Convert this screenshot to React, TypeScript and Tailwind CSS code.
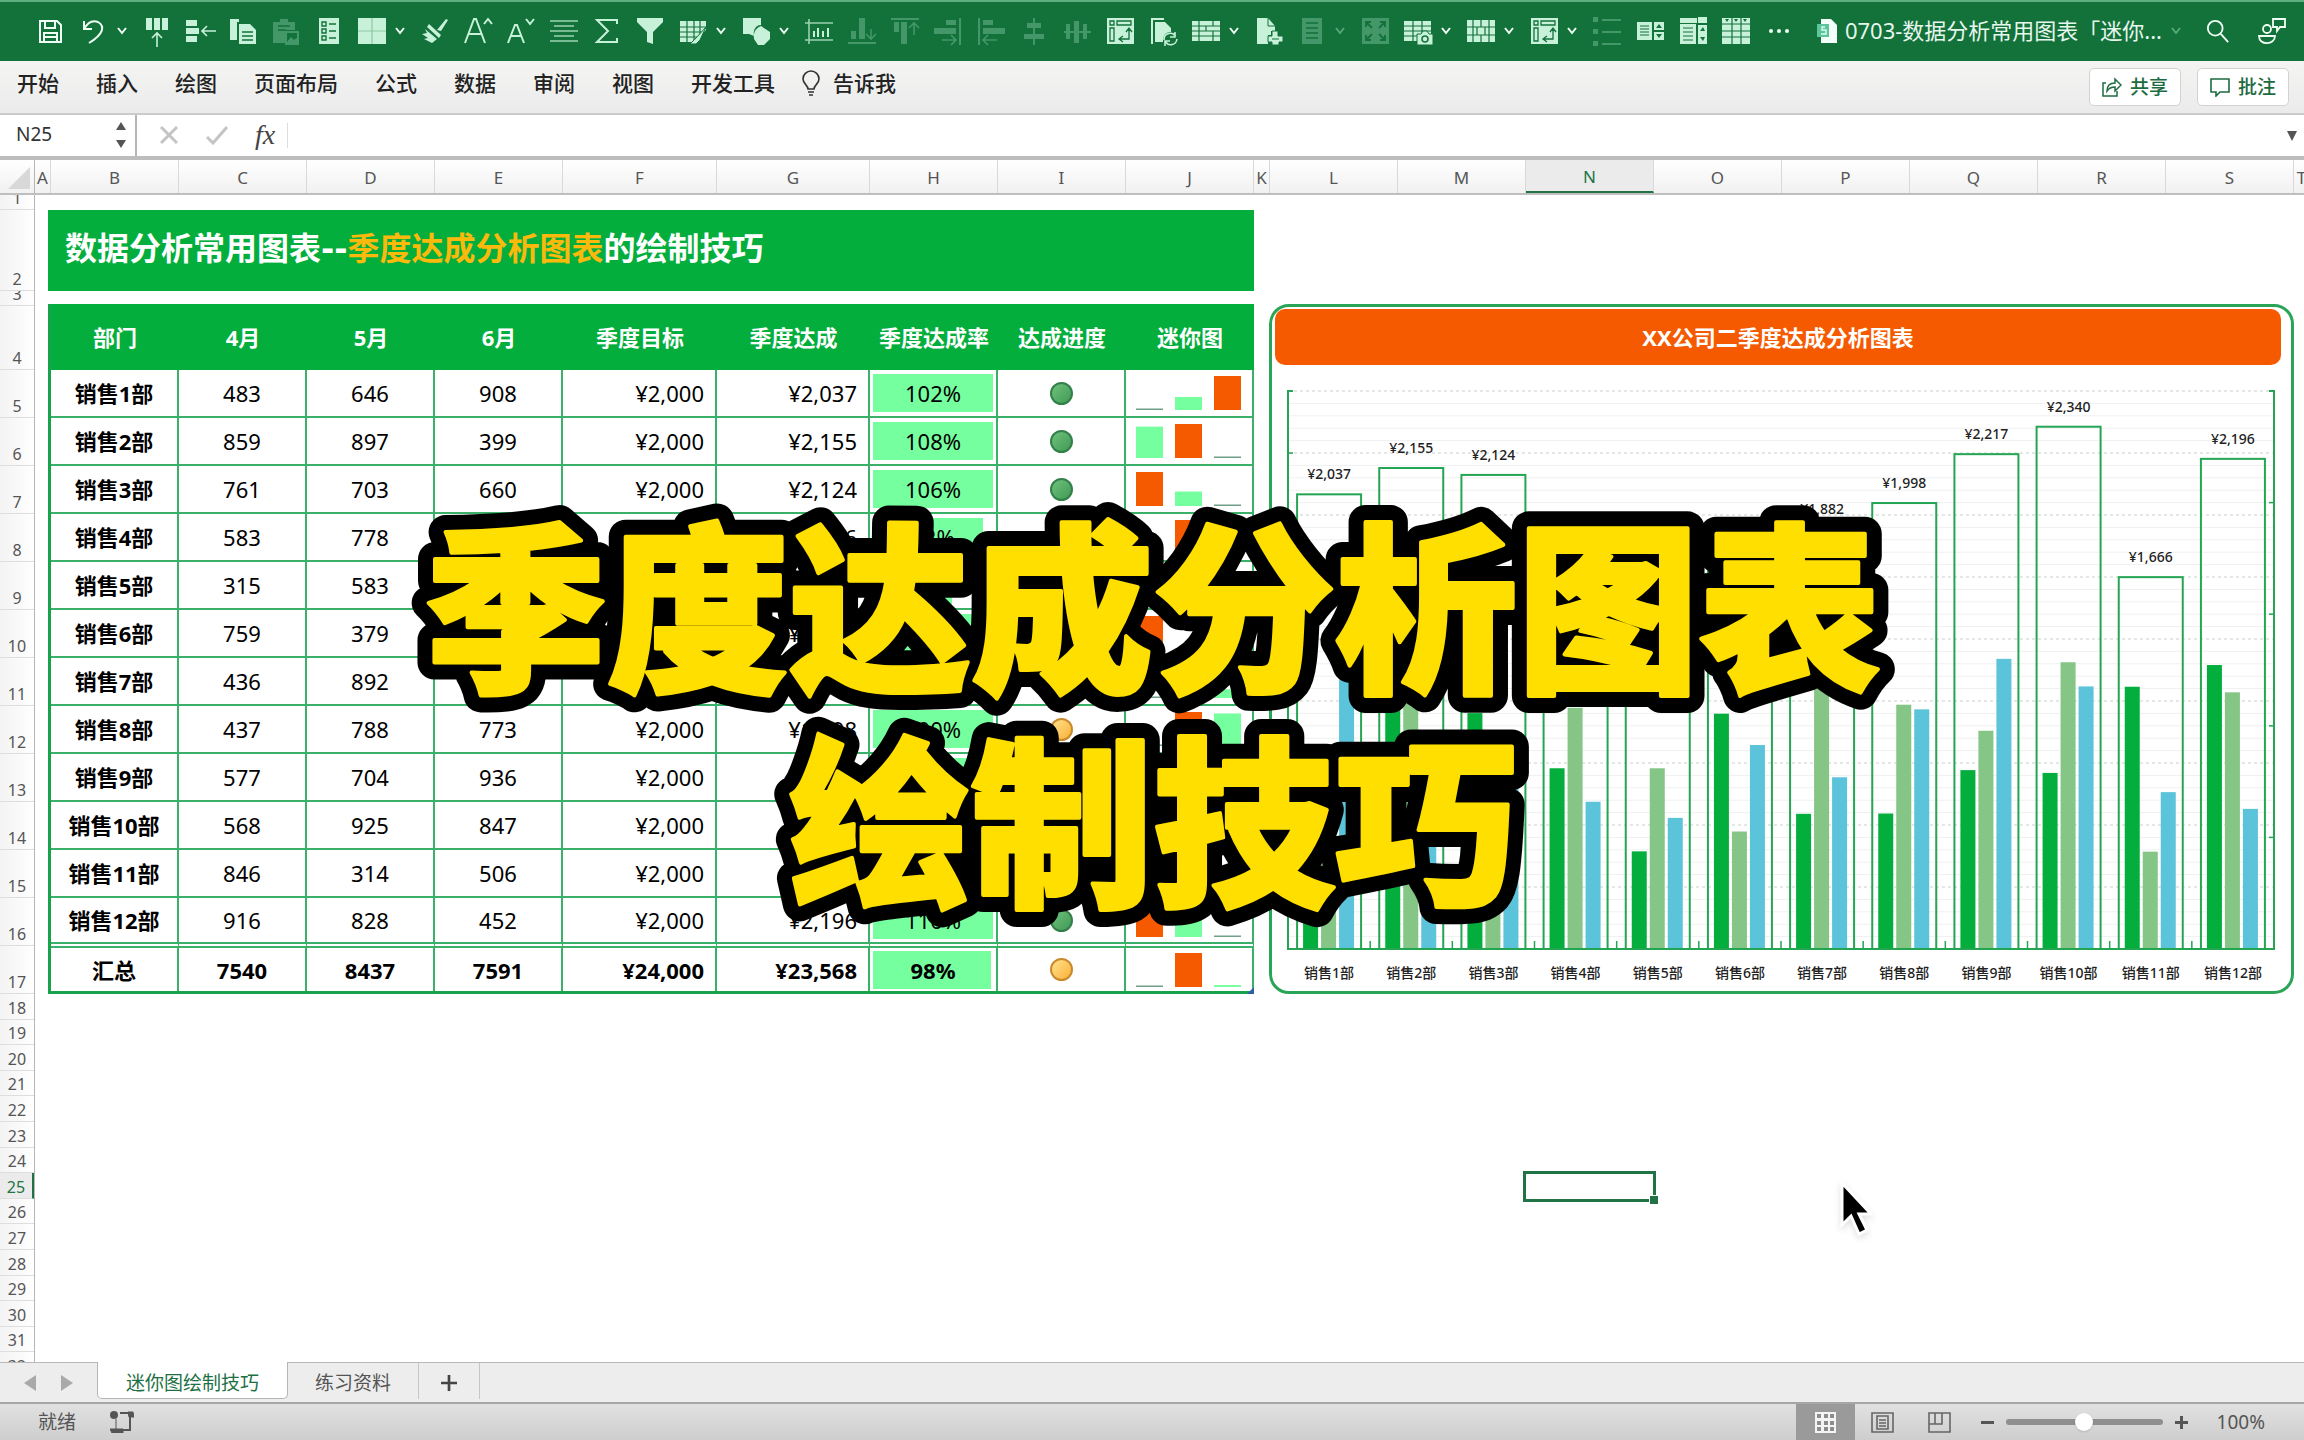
import React, { useState } from 'react';

interface DeptRow {
  name: string;
  months: [number, number, number];
}

interface Tool {
  id: string;
  label: string;
  menu?: boolean;
  dim?: boolean;
}

const TARGET = 2000;

const rows: DeptRow[] = [
  { name: '销售1部', months: [483, 646, 908] },
  { name: '销售2部', months: [859, 897, 399] },
  { name: '销售3部', months: [761, 703, 660] },
  { name: '销售4部', months: [583, 778, 475] },
  { name: '销售5部', months: [315, 583, 423] },
  { name: '销售6部', months: [759, 379, 658] },
  { name: '销售7部', months: [436, 892, 554] },
  { name: '销售8部', months: [437, 788, 773] },
  { name: '销售9部', months: [577, 704, 936] },
  { name: '销售10部', months: [568, 925, 847] },
  { name: '销售11部', months: [846, 314, 506] },
  { name: '销售12部', months: [916, 828, 452] },
];

const tools: Tool[] = [
  { id: 'save', label: '保存' },
  { id: 'undo', label: '撤消', menu: true },
  { id: 'insertRow', label: '插入行' },
  { id: 'insertCol', label: '插入列' },
  { id: 'copy', label: '复制' },
  { id: 'paste', label: '粘贴', dim: true },
  { id: 'form', label: '记录单' },
  { id: 'borders', label: '边框', menu: true },
  { id: 'brush', label: '清除' },
  { id: 'bigger', label: '增大字号' },
  { id: 'smaller', label: '减小字号' },
  { id: 'center', label: '居中' },
  { id: 'sum', label: '求和' },
  { id: 'filter', label: '筛选' },
  { id: 'tableStyle', label: '表格格式', menu: true },
  { id: 'shapes', label: '形状', menu: true },
  { id: 'chart', label: '图表' },
  { id: 'alignBottom', label: '底端对齐', dim: true },
  { id: 'alignTop', label: '顶端对齐', dim: true },
  { id: 'alignRight', label: '右对齐', dim: true },
  { id: 'alignLeft', label: '左对齐', dim: true },
  { id: 'alignMiddle', label: '水平居中', dim: true },
  { id: 'alignCenter', label: '垂直居中', dim: true },
  { id: 'pivot', label: '数据透视表' },
  { id: 'refresh', label: '刷新' },
  { id: 'table', label: '表格', menu: true },
  { id: 'print', label: '打印' },
  { id: 'doc', label: '页面', menu: true, dim: true },
  { id: 'expand', label: '调整大小', dim: true },
  { id: 'camera', label: '照相机', menu: true },
  { id: 'cells', label: '单元格', menu: true },
  { id: 'pivot', label: '透视图', menu: true },
  { id: 'bullets', label: '列表', dim: true },
  { id: 'spin', label: '数值调节钮' },
  { id: 'listBox', label: '列表框' },
  { id: 'columns', label: '列' },
  { id: 'more', label: '更多' },
];

const ribbonTabs = ['开始', '插入', '绘图', '页面布局', '公式', '数据', '审阅', '视图', '开发工具'];

const columns = [
  { name: 'A', width: 'w-[16px]' },
  { name: 'B', width: 'w-[128px]' },
  { name: 'C', width: 'w-[128px]' },
  { name: 'D', width: 'w-[128px]' },
  { name: 'E', width: 'w-[128px]' },
  { name: 'F', width: 'w-[154px]' },
  { name: 'G', width: 'w-[153px]' },
  { name: 'H', width: 'w-[128px]' },
  { name: 'I', width: 'w-[128px]' },
  { name: 'J', width: 'w-[128px]' },
  { name: 'K', width: 'w-[16px]' },
  { name: 'L', width: 'w-[128px]' },
  { name: 'M', width: 'w-[128px]' },
  { name: 'N', width: 'w-[128px]' },
  { name: 'O', width: 'w-[128px]' },
  { name: 'P', width: 'w-[128px]' },
  { name: 'Q', width: 'w-[128px]' },
  { name: 'R', width: 'w-[128px]' },
  { name: 'S', width: 'w-[128px]' },
  { name: 'T', width: 'w-[16px]' },
];

const sum = (list: number[]) => list.reduce((a, b) => a + b, 0);
const money = (n: number) => '¥' + n.toLocaleString('en-US');

const D = '#13713a';

// 工具栏图标，画布 28x28
const toolIcons: Record<string, React.ReactNode> = {
  save: (
    <g fill="none" stroke="#effff5" strokeWidth="2">
      <path d="M3 4h17l4 4v17H3z" />
      <path d="M8 4v7h10V4M7 25v-9h13v9M7 20h13" />
    </g>
  ),
  undo: <path d="M4 4v8h8M4 12C8 5 13 3 18 5c7 4 6 12-9 21" fill="none" stroke="#effff5" strokeWidth="2" />,
  insertRow: (
    <g>
      <path d="M3 1h6v12H3zM11 1h6v12h-6zM19 1h6v12h-6z" fill="currentColor" />
      <path d="M14 30V17M9 21l5-5 5 5" fill="none" stroke="currentColor" strokeWidth="1.6" />
    </g>
  ),
  insertCol: (
    <g>
      <path d="M0 3h11v6H0zM0 11h13v6H0zM0 19h11v6H0z" fill="currentColor" />
      <path d="M30 14H16M21 9l-5 5 5 5" fill="none" stroke="currentColor" strokeWidth="1.6" />
    </g>
  ),
  copy: (
    <g>
      <path d="M1 2h9v3H8v18H1z" fill="currentColor" />
      <path d="M10 7h11l6 6v14H10z" fill="currentColor" />
      <path d="M13 15h11M13 19h11M13 23h11" stroke={D} strokeWidth="1.5" />
    </g>
  ),
  paste: (
    <g>
      <path d="M1 5h7V2h8v3h7v8h-9v13H1z" fill="currentColor" />
      <path d="M14 15h12v12H14z" fill="none" stroke="currentColor" strokeWidth="2" />
      <path d="M15 25l4-5 3 3 4-3v6H15z" fill="currentColor" />
      <path d="M6 9h12M6 13h8" stroke={D} strokeWidth="1.5" />
    </g>
  ),
  form: (
    <g>
      <path d="M4 1h20v26H4z" fill="currentColor" />
      <g fill="none" stroke={D} strokeWidth="1.4">
        <path d="M7 5h4v4H7zM7 12h4v4H7zM7 19h4v4H7zM14 7h7M14 14h7M14 21h7" />
      </g>
    </g>
  ),
  borders: (
    <g>
      <path d="M0 1h28v26H0z" fill="currentColor" />
      <path d="M14 1v26M0 14h28" stroke="#8cc8a4" strokeWidth="1.2" />
    </g>
  ),
  brush: (
    <g fill="currentColor">
      <path d="M16 13l9-11 2 1-7 11z" />
      <path d="M8 7l12 11-2 3L6 10zM4 12l12 10-5 4-8-4 4-1-6-4 5-1z" />
    </g>
  ),
  bigger: <path d="M1 26L10 2h2l9 24M5 17h12M20 7l4-5 4 5" fill="none" stroke="currentColor" strokeWidth="2" />,
  smaller: <path d="M1 26L8 8h2l7 18M4 19h10M19 2l4 5 4-5" fill="none" stroke="currentColor" strokeWidth="2" />,
  center: <path d="M0 4h28M4 9h20M0 14h28M4 19h20M0 24h28" stroke="#9bd3b1" strokeWidth="1.5" />,
  sum: <path d="M24 7V3H4l11 11L4 25h20v-4" fill="none" stroke="currentColor" strokeWidth="2" />,
  filter: <path d="M1 1h26v4L17 15v12l-6-2V15L1 5z" fill="currentColor" />,
  tableStyle: (
    <g>
      <path d="M1 4h26v9L15 25H1z" fill="currentColor" />
      <path d="M8 4v21M15 4v19M21 4v14M1 10h26M1 15h24M1 20h19" stroke={D} strokeWidth="1.2" />
      <path d="M27 10L17 21l-6 6h6l4-4z" fill="currentColor" stroke={D} />
    </g>
  ),
  shapes: (
    <g fill="currentColor">
      <path d="M1 1h18v7c-6 0-8 6-7 11L7 17H1z" />
      <path d="M19 9l9 6v7l-6 6h-6l-4-6c-1-7 2-11 7-13z" />
    </g>
  ),
  chart: (
    <g stroke="currentColor" strokeWidth="1.6">
      <path d="M4 2v25M0 6h28M0 23h28" opacity="0.75" />
      <path d="M9 20v-6M13 20v-9M18 20v-6M23 20v-9" strokeWidth="2" />
    </g>
  ),
  alignBottom: (
    <g fill="currentColor">
      <path d="M3 14h5v8H3zM11 1h6v21h-6zM0 25h28v2H0z" />
      <path d="M23 12v10M18 17l5 5 5-5" fill="none" stroke="currentColor" strokeWidth="1.6" />
    </g>
  ),
  alignTop: (
    <g fill="currentColor">
      <path d="M0 1h28v2H0zM3 5h5v10H3zM10 5h6v22h-6z" />
      <path d="M23 18V6M18 11l5-5 5 5" fill="none" stroke="currentColor" strokeWidth="1.6" />
    </g>
  ),
  alignRight: (
    <g fill="currentColor">
      <path d="M25 1h2v27h-2zM12 3h10v5H12zM0 11h22v6H0z" />
      <path d="M8 23h14M17 18l5 5-5 5" fill="none" stroke="currentColor" strokeWidth="1.6" />
    </g>
  ),
  alignLeft: (
    <g fill="currentColor">
      <path d="M1 1h2v27H1zM6 3h10v5H6zM6 11h22v6H6z" />
      <path d="M6 23h14M11 18l-5 5 5 5" fill="none" stroke="currentColor" strokeWidth="1.6" />
    </g>
  ),
  alignMiddle: (
    <g fill="currentColor">
      <path d="M13 1h2v27h-2zM7 6h14v5H7zM4 17h20v5H4z" />
    </g>
  ),
  alignCenter: (
    <g fill="currentColor">
      <path d="M1 14h27v2H1zM3 7h4v15H3zM11 4h5v22h-5zM20 7h4v15h-4z" />
    </g>
  ),
  pivot: (
    <g>
      <path d="M1 1h27v26H1z" fill="currentColor" />
      <g fill="none" stroke={D} strokeWidth="1.3">
        <path d="M4 4h4v4H4zM11 4h14v4H11zM4 11h4v13H4zM14 22h9V12M20 15l3-4 3 4M17 19l-4 3 4 3" />
      </g>
    </g>
  ),
  refresh: (
    <g>
      <path d="M3 27V2h12" fill="none" stroke="currentColor" strokeWidth="2" />
      <path d="M6 5h10l6 6v4c-6 0-8 4-8 10H6z" fill="currentColor" />
      <path d="M15 23c0-8 9-8 11-4M26 15v5h-5M28 22c-1 7-9 7-11 3M16 29v-5h5" fill="none" stroke="currentColor" strokeWidth="1.6" />
    </g>
  ),
  table: (
    <g>
      <path d="M0 4h28v20H0z" fill="currentColor" />
      <path d="M0 9h28M0 14h28M0 19h28M7 4v20M21 4v5M21 14v10M14 9v5" stroke={D} strokeWidth="1.2" />
    </g>
  ),
  print: (
    <g>
      <path d="M2 1h11l7 8v5h-4v4h-3v9H2z" fill="currentColor" />
      <path d="M13 1v8h7" fill="none" stroke={D} />
      <path d="M17 14h6v5h5v6h-4v3h-7v-3h-4v-6h4z" fill="currentColor" stroke={D} />
      <path d="M17 22h7" stroke={D} />
    </g>
  ),
  doc: (
    <g>
      <path d="M4 1h20v26H4z" fill="currentColor" />
      <path d="M8 6h12M8 11h12M8 16h12M8 21h12" stroke={D} strokeWidth="1.5" />
    </g>
  ),
  expand: (
    <g>
      <path d="M1 1h27v26H1z" fill="currentColor" />
      <path d="M5 10V5h5M19 5h5v5M24 18v5h-5M10 23H5v-5M5 5l6 6M24 5l-6 6M24 23l-6-6M5 23l6-6" fill="none" stroke={D} strokeWidth="1.8" />
    </g>
  ),
  camera: (
    <g>
      <path d="M0 4h27v20H0z" fill="currentColor" />
      <path d="M9 4v20M18 4v20M0 9h27M0 14h27M0 19h27" stroke={D} strokeWidth="1.2" />
      <path d="M13 17h4l2-3h4l2 3h4v11H13z" fill="currentColor" stroke={D} />
      <circle cx="21" cy="22" r="3" fill="none" stroke={D} strokeWidth="1.5" />
    </g>
  ),
  cells: (
    <g>
      <path d="M0 3h28v22H0z" fill="currentColor" />
      <path d="M6 3v22M14 3v7M10 10v8M18 10v8M14 18v7M22 3v22M0 10h28M0 18h28" stroke={D} strokeWidth="1.2" />
    </g>
  ),
  bullets: (
    <g fill="currentColor">
      <path d="M0 0h5v5H0zM0 12h5v5H0zM0 24h5v5H0zM9 2h19v2H9zM9 14h19v2H9zM9 26h19v2H9z" />
    </g>
  ),
  spin: (
    <g>
      <path d="M1 5h15v18H1zM18 5h10v8H18zM18 15h10v8H18z" fill="currentColor" />
      <path d="M4 9h9M4 12h9M4 15h9M4 18h9" stroke={D} strokeWidth="1.2" />
      <path d="M20 11l3-4 3 4zM20 17l3 4 3-4z" fill={D} />
    </g>
  ),
  listBox: (
    <g>
      <path d="M1 1h17v5H1zM1 7h16v20H1zM19 0h9v6h-9zM19 8h9v19h-9z" fill="currentColor" />
      <path d="M4 11h10M4 15h10M4 19h10M4 23h10" stroke={D} strokeWidth="1.2" />
      <path d="M21 14l3-4 2 4zM21 20l3 4 2-4z" fill={D} />
    </g>
  ),
  columns: (
    <g>
      <path d="M0 1h28v26H0z" fill="currentColor" />
      <path d="M10 1v26M19 1v26M0 7h28M0 14h28M0 20h28" stroke={D} strokeWidth="1.2" />
      <path d="M3 2h4l-2 3zM12 2h4l-2 3zM21 2h4l-2 3z" fill={D} />
    </g>
  ),
  more: (
    <g fill="#effff5">
      <circle cx="6" cy="14" r="2" />
      <circle cx="14" cy="14" r="2" />
      <circle cx="22" cy="14" r="2" />
    </g>
  ),
};

const Chevron: React.FC<{ dim?: boolean }> = ({ dim }) => (
  <svg viewBox="0 0 12 8" className={dim ? 'h-2 w-3 text-[#57a878]' : 'h-2 w-3 text-[#effff5]'}>
    <path d="M2 1l4 5 4-5" fill="none" stroke="currentColor" strokeWidth="2" />
  </svg>
);

const TitleBar: React.FC = () => (
  <header className="flex h-[61px] shrink-0 items-center border-t-2 border-[#5fae80] bg-[#13713a] pr-[18px] pb-[2px] pl-[37px]">
    <div className="flex items-center gap-[15px]">
      {tools.map((tool, i) => (
        <div key={i} className="flex items-center gap-2">
          <button type="button" aria-label={tool.label}>
            <svg
              viewBox="0 0 28 28"
              className={
                tool.dim ? 'h-7 w-7 overflow-visible text-[#439768]' : 'h-7 w-7 overflow-visible text-[#c8f1d9]'
              }
            >
              {toolIcons[tool.id]}
            </svg>
          </button>
          {tool.menu && (
            <button type="button" aria-label={tool.label + '选项'}>
              <Chevron dim={tool.dim} />
            </button>
          )}
        </div>
      ))}
    </div>
    <div className="ml-auto flex items-center">
      <svg viewBox="0 0 20 26" className="h-[26px] w-5">
        <path d="M4 1h10l6 6v18H4z" fill="#f3fff8" />
        <path d="M0 6h12v13H0z" fill="#5cc59c" />
        <path d="M8 9H5v3h4v4H4" fill="none" stroke="#d8ffec" strokeWidth="1.4" />
      </svg>
      <h1 className="ml-2 text-[22px] whitespace-nowrap text-[#e6f7ed]">0703-数据分析常用图表「迷你...</h1>
      <button type="button" aria-label="文件选项" className="ml-2">
        <Chevron dim />
      </button>
      <button type="button" aria-label="搜索" className="ml-6">
        <svg viewBox="0 0 26 26" className="h-6 w-6">
          <circle cx="10" cy="10" r="8" fill="none" stroke="#effff5" strokeWidth="2" />
          <path d="M16 16l8 9" stroke="#effff5" strokeWidth="2" />
        </svg>
      </button>
      <button type="button" aria-label="共同创作" className="ml-7">
        <svg viewBox="0 0 28 28" className="h-7 w-7">
          <g fill="none" stroke="#effff5" strokeWidth="1.8">
            <circle cx="9" cy="12" r="4" />
            <path d="M1 19h16c0 9-16 10-16 0zM15 2h12v8h-5l-3 4v-4h-4z" />
          </g>
        </svg>
      </button>
    </div>
  </header>
);

const Ribbon: React.FC = () => (
  <nav className="flex h-[52px] shrink-0 items-center bg-gradient-to-b from-[#f4f4f2] to-[#ebebec] pr-[15px] pl-[17px]">
    <div className="flex items-center gap-[37px] pb-2 text-[21px] leading-[30px] font-medium text-[#222]">
      {ribbonTabs.map((tab) => (
        <button key={tab} type="button">
          {tab}
        </button>
      ))}
    </div>
    <button type="button" className="ml-[26px] flex items-center gap-3 pb-2 text-[21px] leading-[30px] font-medium text-[#222]">
      <svg viewBox="0 0 20 26" className="h-[26px] w-5">
        <path d="M7 19c0-4-5-5-5-10a8 8 0 0 1 16 0c0 5-5 6-5 10zM7 22h6M8 25h4" fill="none" stroke="#333" strokeWidth="1.6" />
      </svg>
      告诉我
    </button>
    <div className="ml-auto flex gap-4 text-[19px] font-medium text-[#1d6b41]">
      <button type="button" className="flex h-[38px] items-center gap-2 rounded-[5px] border border-[#d2d2d2] bg-white px-3">
        <svg viewBox="0 0 20 20" className="h-5 w-5">
          <path d="M4 6H1v13h14v-5M5 14c0-6 4-8 8-8V2l6 6-6 6v-4c-4 0-6 1-8 4z" fill="none" stroke="currentColor" strokeWidth="1.5" />
        </svg>
        共享
      </button>
      <button type="button" className="flex h-[38px] items-center gap-2 rounded-[5px] border border-[#d2d2d2] bg-white px-3">
        <svg viewBox="0 0 20 20" className="h-5 w-5">
          <path d="M1 2h18v13h-9l-4 4v-4H1z" fill="none" stroke="currentColor" strokeWidth="1.6" />
        </svg>
        批注
      </button>
    </div>
  </nav>
);

const FormulaBar: React.FC = () => {
  const [cell, setCell] = useState('N25');
  const [formula, setFormula] = useState('');

  return (
    <div className="flex h-[47px] shrink-0 items-stretch border-t-2 border-b-4 border-t-[#cbcbcb] border-b-[#bdbdbd] bg-white">
      <div className="flex w-[137px] items-center justify-between border-r-2 border-[#b5b5b5] pr-2 pb-[2px] pl-4">
        <input
          aria-label="名称框"
          value={cell}
          onChange={(e) => setCell(e.target.value)}
          className="w-20 text-[19px] text-[#333] outline-none"
        />
        <svg viewBox="0 0 12 28" className="h-7 w-3">
          <path d="M1 9l5-8 5 8zM1 19l5 8 5-8z" fill="#555" />
        </svg>
      </div>
      <div className="flex items-center gap-[27px] pb-[2px] pl-[22px]">
        <button type="button" aria-label="取消">
          <svg viewBox="0 0 20 20" className="h-5 w-5">
            <path d="M2 2l16 16M18 2L2 18" stroke="#c4c4c4" strokeWidth="3" />
          </svg>
        </button>
        <button type="button" aria-label="输入">
          <svg viewBox="0 0 22 20" className="h-5 w-[22px]">
            <path d="M1 12l6 6L21 2" fill="none" stroke="#c4c4c4" strokeWidth="3" />
          </svg>
        </button>
        <button type="button" aria-label="插入函数" className="font-['Liberation_Serif',serif] text-[28px] leading-8 text-[#444] italic">
          fx
        </button>
      </div>
      <input
        aria-label="编辑栏"
        value={formula}
        onChange={(e) => setFormula(e.target.value)}
        className="my-2 ml-3 flex-1 border-l border-[#ddd] px-2 text-[19px] outline-none"
      />
      <button type="button" aria-label="展开编辑栏" className="px-[7px]">
        <svg viewBox="0 0 10 10" className="h-[10px] w-[10px]">
          <path d="M0 0h10L5 10z" fill="#555" />
        </svg>
      </button>
    </div>
  );
};

const ColumnHeads: React.FC = () => (
  <div className="flex h-[35px] shrink-0 overflow-hidden border-b-2 border-[#bfbfbf] bg-gradient-to-b from-white to-[#f1f1f1] text-[17px] text-[#555]">
    <div className="flex w-[35px] shrink-0 items-end justify-end border-r border-[#b5b5b5] p-1">
      <svg viewBox="0 0 22 22" className="h-[22px] w-[22px]">
        <path d="M22 0v22H0z" fill="#d8d8d8" />
      </svg>
    </div>
    {columns.map((col) => (
      <div
        key={col.name}
        className={
          col.width +
          ' flex shrink-0 items-center justify-center border-r pt-[3px] ' +
          (col.name === 'N' ? 'border-b-2 border-[#217346] border-r-[#d9d9d9] bg-[#ebebeb] text-[#217346]' : 'border-[#d9d9d9]')
        }
      >
        {col.name}
      </div>
    ))}
  </div>
);

const RowHeads: React.FC = () => {
  const small = Array.from({ length: 15 }, (_, i) => 18 + i);
  const tall = Array.from({ length: 13 }, (_, i) => 5 + i);
  const cell = 'flex shrink-0 items-end justify-center overflow-hidden border-b border-[#dedede] pb-px';

  return (
    <div className="w-[35px] shrink-0 border-r border-[#b5b5b5] bg-gradient-to-r from-[#f3f3f3] to-white text-base leading-5 text-[#555]">
      <div className={cell + ' h-[15px]'}>1</div>
      <div className={cell + ' h-[81px]'}>2</div>
      <div className={cell + ' h-[15px]'}>3</div>
      <div className={cell + ' h-[64px]'}>4</div>
      {tall.map((n) => (
        <div key={n} className={cell + ' h-12'}>
          {n}
        </div>
      ))}
      <div className="flex h-96 flex-col">
        {small.map((n) => (
          <div key={n} className={cell + ' flex-1' + (n === 25 ? ' border-r-2 border-r-[#217346] bg-[#ebebeb] text-[#217346]' : '')}>
            {n}
          </div>
        ))}
      </div>
    </div>
  );
};

const Sparkline: React.FC<{ values: number[] }> = ({ values }) => {
  const max = Math.max(...values);
  const min = Math.min(...values);
  return (
    <svg viewBox="0 0 106 34" className="ml-[10px] h-[34px] w-[106px]">
      {values.map((v, i) => {
        const h = Math.max(1.5, ((v - min) / (max - min)) * 34);
        const fill = v === max ? '#f65a00' : v === min ? '#6f9f86' : '#75ff9f';
        return <rect key={i} x={i * 39} y={34 - h} width="27" height={h} fill={fill} />;
      })}
    </svg>
  );
};

const Light: React.FC<{ good: boolean }> = ({ good }) => (
  <span
    className={
      good
        ? 'mx-auto block h-[23px] w-[23px] rounded-full border-2 border-[#347e49] bg-gradient-to-br from-[#6fc27d] to-[#3f9a55]'
        : 'mx-auto block h-[23px] w-[23px] rounded-full border-2 border-[#c98a2b] bg-gradient-to-br from-[#ffe08a] to-[#f9b233]'
    }
  />
);

const RateBar: React.FC<{ rate: number }> = ({ rate }) => (
  <div className="relative mx-[3px] flex h-[38px] items-center justify-center">
    <div className="absolute inset-y-0 left-0 bg-[#75ff9f]" style={{ width: Math.min(100, rate) + '%' }} />
    <span className="relative">{rate}%</span>
  </div>
);

const heads = ['部门', '4月', '5月', '6月', '季度目标', '季度达成', '季度达成率', '达成进度', '迷你图'];

const DataTable: React.FC = () => {
  const totals = [0, 1, 2].map((m) => sum(rows.map((r) => r.months[m])));
  const lines = [
    ...rows.map((r) => ({ name: r.name, months: r.months as number[], target: TARGET })),
    { name: '汇总', months: totals, target: TARGET * rows.length },
  ];

  return (
    <table className="w-[1206px] shrink-0 table-fixed border-separate border-spacing-0 border-b-[3px] border-l-[3px] border-[#17a24b] text-center text-[22px] leading-7 text-black">
      <colgroup>
        <col className="w-[128px]" />
        <col className="w-[128px]" />
        <col className="w-[128px]" />
        <col className="w-[128px]" />
        <col className="w-[154px]" />
        <col className="w-[153px]" />
        <col className="w-[128px]" />
        <col className="w-[128px]" />
        <col className="w-[128px]" />
      </colgroup>
      <thead>
        <tr className="bg-[#03ae3d] text-white">
          {heads.map((h) => (
            <th key={h} className="h-[66px] p-0 font-bold whitespace-nowrap">
              {h}
            </th>
          ))}
        </tr>
      </thead>
      <tbody>
        {lines.map((line, i) => {
          const total = i === lines.length - 1;
          const done = sum(line.months);
          const rate = Math.round((done / line.target) * 100);
          const cell = total
            ? 'h-[43px] p-0 border-r-2 border-[#3bb068] font-bold'
            : i === lines.length - 2
              ? 'h-[50px] p-0 border-r-2 border-b-6 border-b-[#3bb068] border-[#3bb068] [border-bottom-style:double]'
              : 'h-12 p-0 border-r-2 border-b-2 border-[#3bb068]';
          return (
            <tr key={line.name}>
              <th scope="row" className={cell + ' font-bold'}>
                {line.name}
              </th>
              {line.months.map((m, k) => (
                <td key={k} className={cell}>
                  {m}
                </td>
              ))}
              <td className={cell + ' text-right'}>
                <span className="pr-[11px]">{money(line.target)}</span>
              </td>
              <td className={cell + ' text-right'}>
                <span className="pr-[11px]">{money(done)}</span>
              </td>
              <td className={cell}>
                <RateBar rate={rate} />
              </td>
              <td className={cell}>
                <Light good={done > line.target} />
              </td>
              <td className={cell}>
                <Sparkline values={line.months} />
              </td>
            </tr>
          );
        })}
      </tbody>
    </table>
  );
};

const PLOT = { left: 16, right: 1002, top: 25, bottom: 583 };
const STEP = (PLOT.right - PLOT.left) / 12;
const barColors = ['#03ae3d', '#85c585', '#5bc4da'];

const QuarterChart: React.FC = () => {
  const height = PLOT.bottom - PLOT.top;
  const minor = Array.from({ length: 46 }, (_, i) => i);

  return (
    <section className="mr-[10px] flex-1 rounded-[20px] border-[3px] border-[#2aa557] bg-white">
      <h2 className="mt-[2px] mr-[10px] mb-px ml-[3px] flex h-14 items-center justify-center rounded-[10px] bg-[#f65a00] text-[22px] font-bold text-white">
        XX公司二季度达成分析图表
      </h2>
      <svg viewBox="0 0 1019 621" className="block w-full" role="img" aria-label="二季度达成分析图表">
        {minor.map((i) => {
          const y = PLOT.bottom - (i * height) / 45;
          return i % 5 === 0 ? (
            <path key={i} d={`M${PLOT.left} ${y}H${PLOT.right}`} stroke="#c9d1cc" strokeWidth="1.2" strokeDasharray="3 3" />
          ) : (
            <path key={i} d={`M${PLOT.left} ${y}H${PLOT.right}`} stroke="#eef1ef" />
          );
        })}
        {rows.map((r, i) => {
          const cx = PLOT.left + STEP * (i + 0.5);
          const done = sum(r.months);
          const top = PLOT.bottom - (done / 2500) * height;
          return (
            <g key={r.name}>
              {r.months.map((m, k) => {
                const h = (m / 1800) * height;
                return <rect key={k} x={cx - 26 + k * 18} y={PLOT.bottom - h} width="15" height={h} fill={barColors[k]} />;
              })}
              <rect x={cx - 32} y={top} width="64" height={PLOT.bottom - top} fill="none" stroke="#24a553" strokeWidth="2" />
              <text x={cx} y={top - 15} textAnchor="middle" fontSize="14" fontWeight="500" fill="#222">
                {money(done)}
              </text>
              <text x={cx} y="612" textAnchor="middle" fontSize="14" fontWeight="500" fill="#222">
                {r.name}
              </text>
              <path d={`M${PLOT.left + STEP * (i + 1)} ${PLOT.bottom}v-8`} stroke="#24a553" strokeWidth="1.5" />
            </g>
          );
        })}
        <path
          d={`M${PLOT.left + 5} ${PLOT.top}H${PLOT.left}V${PLOT.bottom}H${PLOT.right}V${PLOT.top}h-5`}
          fill="none"
          stroke="#24a553"
          strokeWidth="2"
        />
        {[1, 2, 3, 4, 5, 6, 7, 8].map((i) => (
          <path key={i} d={`M${PLOT.left} ${PLOT.bottom - (i * height) / 9}h5`} stroke="#24a553" strokeWidth="1.5" />
        ))}
        {[1, 2, 3, 4].map((i) => (
          <path key={i} d={`M${PLOT.right} ${PLOT.bottom - (i * height) / 5}h-5`} stroke="#24a553" strokeWidth="1.5" />
        ))}
      </svg>
    </section>
  );
};

const SheetTabs: React.FC = () => (
  <div className="flex h-[42px] shrink-0 items-start border-t border-b-2 border-t-[#b9b9b9] border-b-[#a6a6a6] bg-[#ededed] text-[19px] leading-9 text-[#555]">
    <div className="flex h-10 w-[97px] items-center gap-[25px] pl-6">
      <button type="button" aria-label="上一张">
        <svg viewBox="0 0 12 16" className="h-4 w-3">
          <path d="M12 0v16L0 8z" fill="#a9a9a9" />
        </svg>
      </button>
      <button type="button" aria-label="下一张">
        <svg viewBox="0 0 12 16" className="h-4 w-3">
          <path d="M0 0v16l12-8z" fill="#a9a9a9" />
        </svg>
      </button>
    </div>
    <button type="button" className="-mt-px h-[37px] rounded-b-[5px] border border-t-0 border-[#b5b5b5] bg-white px-7 pt-[5px] leading-8 text-[#1d7044]">
      迷你图绘制技巧
    </button>
    <button type="button" className="h-9 border-r border-[#c6c6c6] px-[27px] pt-1 leading-8">
      练习资料
    </button>
    <button type="button" aria-label="新建工作表" className="flex h-9 items-center border-r border-[#c6c6c6] px-[21px] pt-1">
      <svg viewBox="0 0 18 18" className="h-4 w-[18px]">
        <path d="M9 0v18M0 9h18" stroke="#444" strokeWidth="3" />
      </svg>
    </button>
  </div>
);

const StatusBar: React.FC = () => {
  const [zoom, setZoom] = useState(50);

  return (
    <footer className="flex h-9 shrink-0 items-center bg-gradient-to-b from-[#e1e1e1] to-[#cecece] pr-[39px] pl-[38px] text-[19px] text-[#555]">
      <span>就绪</span>
      <button type="button" aria-label="录制宏" className="ml-[34px]">
        <svg viewBox="0 0 24 22" className="h-[22px] w-6">
          <circle cx="4" cy="4" r="4" fill="#555" />
          <path d="M10 2h10v17H2" fill="none" stroke="#555" strokeWidth="2" />
          <path d="M6 8v10M0 18h13v4H2zM18 1h5l1 5h-5z" fill="#555" stroke="#555" />
        </svg>
      </button>
      <div className="ml-auto flex h-full items-center">
        <button type="button" aria-label="普通视图" className="flex h-full w-[59px] items-center justify-center bg-[#9a9a9a]">
          <svg viewBox="0 0 21 21" className="h-[21px] w-[21px]">
            <path d="M0 0h21v21H0z" fill="#f4f4f4" />
            <path d="M2 2h4v4H2zM9 2h4v4H9zM15 2h4v4h-4zM2 9h4v4H2zM9 9h4v4H9zM15 9h4v4h-4zM2 15h4v4H2zM9 15h4v4H9zM15 15h4v4h-4z" fill="#8d8d8d" />
          </svg>
        </button>
        <button type="button" aria-label="页面布局视图" className="ml-4">
          <svg viewBox="0 0 23 21" className="h-[21px] w-[23px]">
            <path d="M1 1h21v19H1zM6 4h11v13H6zM8 8h7M8 11h7M8 14h7" fill="none" stroke="#666" strokeWidth="1.6" />
          </svg>
        </button>
        <button type="button" aria-label="分页预览" className="ml-[34px]">
          <svg viewBox="0 0 23 21" className="h-[21px] w-[23px]">
            <path d="M1 1h21v19H1zM1 12h13V1M7 1v11" fill="none" stroke="#666" strokeWidth="1.6" />
          </svg>
        </button>
        <button type="button" aria-label="缩小" className="ml-[30px]" onClick={() => setZoom(zoom - 5)}>
          <svg viewBox="0 0 13 13" className="h-[13px] w-[13px]">
            <path d="M0 6.500h13" stroke="#555" strokeWidth="3" />
          </svg>
        </button>
        <input
          type="range"
          aria-label="缩放"
          min={0}
          max={100}
          value={zoom}
          onChange={(e) => setZoom(Number(e.target.value))}
          className="mx-3 h-[6px] w-[157px] appearance-none rounded-full bg-[#8f8f8f] [&::-webkit-slider-thumb]:h-[18px] [&::-webkit-slider-thumb]:w-[18px] [&::-webkit-slider-thumb]:appearance-none [&::-webkit-slider-thumb]:rounded-full [&::-webkit-slider-thumb]:bg-white [&::-webkit-slider-thumb]:shadow"
        />
        <button type="button" aria-label="放大" onClick={() => setZoom(zoom + 5)}>
          <svg viewBox="0 0 13 13" className="h-[13px] w-[13px]">
            <path d="M6.500 0v13M0 6.500h13" stroke="#555" strokeWidth="3" />
          </svg>
        </button>
        <span className="ml-[29px]">100%</span>
      </div>
    </footer>
  );
};

// 视频封面大标题：黑色圆角描边，上面再叠一层加粗的黄色
const CoverTitle: React.FC = () => (
  <svg
    viewBox="0 0 2304 500"
    fontSize="182"
    fontWeight="900"
    textAnchor="middle"
    strokeLinejoin="round"
    className="pointer-events-none absolute inset-x-0 top-[478px] w-full"
  >
    <g fill="#000" stroke="#000" strokeWidth="34">
      <g id="cover-title">
        <text x="1153" y="200">
          季度达成分析图表
        </text>
        <text x="1153" y="414">
          绘制技巧
        </text>
      </g>
    </g>
    <use href="#cover-title" fill="#ffdf00" stroke="#ffdf00" strokeWidth="4" />
  </svg>
);

const App: React.FC = () => (
  <div
    lang="zh-CN"
    className="relative flex h-screen flex-col overflow-hidden bg-white font-['Noto_Sans','Noto_Sans_CJK_SC',sans-serif]"
  >
    <TitleBar />
    <Ribbon />
    <FormulaBar />
    <ColumnHeads />
    <div className="flex min-h-0 flex-1 overflow-hidden">
      <RowHeads />
      <main className="relative flex-1 pt-[15px] pl-[13px]">
        <div className="flex h-[81px] w-[1206px] items-center bg-[#03ae3d] pb-1 pl-[17px] text-[32px] font-bold text-white">
          <p>
            数据分析常用图表<span className="font-['DejaVu_Sans',sans-serif]">--</span>
            <span className="text-[#fbb90c]">季度达成分析图表</span>的绘制技巧
          </p>
        </div>
        <div className="mt-[13px] flex items-stretch gap-[15px]">
          <div className="relative shrink-0">
            <DataTable />
            <svg viewBox="0 0 7 7" className="absolute right-0 bottom-0 h-[7px] w-[7px]">
              <path d="M7 0v7H0z" fill="#2c5fa8" />
            </svg>
          </div>
          <QuarterChart />
        </div>
        {/* 当前选中的 N25 单元格 */}
        <div className="absolute top-[976px] left-[1488px] h-[31px] w-[133px] border-[3px] border-[#217346]">
          <span className="absolute -right-[6px] -bottom-[6px] h-[10px] w-[10px] border border-white bg-[#217346]" />
        </div>
        <svg viewBox="0 0 34 56" className="absolute top-[985px] left-[1804px] h-14 w-[34px] drop-shadow-md">
          <path d="M3 3v42l9-9 8 18 8-4-8-16h12z" fill="#000" stroke="#fff" strokeWidth="3" />
        </svg>
      </main>
    </div>
    <SheetTabs />
    <StatusBar />
    <CoverTitle />
  </div>
);

export default App;
